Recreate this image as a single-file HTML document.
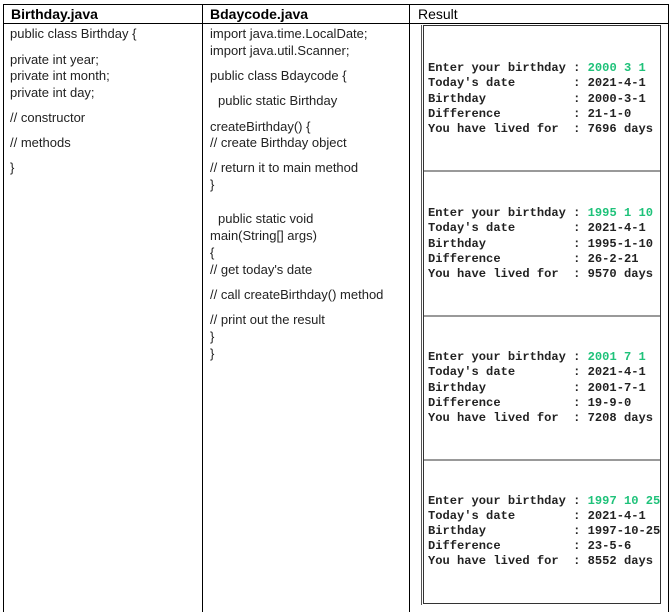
<!DOCTYPE html>
<html><head><style>
body{margin:0;width:672px;height:612px;background:#fff;position:relative;overflow:hidden;font-family:"Liberation Sans",Arial,sans-serif;}
.a{position:absolute;white-space:pre;line-height:1}
.s{font-size:13px;color:#222}
.h{font-size:14px;font-weight:bold;color:#000}
.l{position:absolute;background:#000}
.m{position:absolute;white-space:pre;font-family:"Liberation Mono","DejaVu Sans Mono",monospace;font-weight:bold;font-size:12.1px;color:#222;line-height:1}
.g{color:#1fc27a}
</style></head><body>
<div class="l" style="left:3px;top:4px;width:666px;height:1px"></div>
<div class="l" style="left:3px;top:23px;width:666px;height:1px"></div>
<div class="l" style="left:3px;top:4px;width:1px;height:608px"></div>
<div class="l" style="left:202px;top:4px;width:1px;height:608px"></div>
<div class="l" style="left:409px;top:4px;width:1px;height:608px"></div>
<div class="l" style="left:668px;top:4px;width:1px;height:608px"></div>
<div class="a h" style="left:11px;top:7px">Birthday.java</div>
<div class="a h" style="left:210px;top:7px">Bdaycode.java</div>
<div class="a" style="left:418px;top:7px;font-size:14px">Result</div>

<div class="a s" style="left:10px;top:27px">public class Birthday {</div>
<div class="a s" style="left:10px;top:53px">private int year;</div>
<div class="a s" style="left:10px;top:69px">private int month;</div>
<div class="a s" style="left:10px;top:86px">private int day;</div>
<div class="a s" style="left:10px;top:111px">// constructor</div>
<div class="a s" style="left:10px;top:136px">// methods</div>
<div class="a s" style="left:10px;top:161px">}</div>

<div class="a s" style="left:210px;top:27px">import java.time.LocalDate;</div>
<div class="a s" style="left:210px;top:44px">import java.util.Scanner;</div>
<div class="a s" style="left:210px;top:69px">public class Bdaycode {</div>
<div class="a s" style="left:218px;top:94px">public static Birthday</div>
<div class="a s" style="left:210px;top:120px">createBirthday() {</div>
<div class="a s" style="left:210px;top:136px">// create Birthday object</div>
<div class="a s" style="left:210px;top:161px">// return it to main method</div>
<div class="a s" style="left:210px;top:178px">}</div>
<div class="a s" style="left:218px;top:212px">public static void</div>
<div class="a s" style="left:210px;top:229px">main(String[] args)</div>
<div class="a s" style="left:210px;top:246px">{</div>
<div class="a s" style="left:210px;top:263px">// get today's date</div>
<div class="a s" style="left:210px;top:288px">// call createBirthday() method</div>
<div class="a s" style="left:210px;top:313px">// print out the result</div>
<div class="a s" style="left:210px;top:330px">}</div>
<div class="a s" style="left:210px;top:347px">}</div>

<div class="l" style="left:421px;top:25px;width:1px;height:580px;background:#555"></div>
<div style="position:absolute;left:423px;top:25px;width:236px;height:577px;border:1px solid #333"></div>
<div class="l" style="left:424px;top:170px;width:236px;height:2px;background:#999"></div>
<div class="l" style="left:424px;top:315px;width:236px;height:2px;background:#999"></div>
<div class="l" style="left:424px;top:459px;width:236px;height:2px;background:#999"></div>

<div class="m" style="left:428px;top:61px;line-height:15.3px">Enter your birthday : <span class="g">2000 3 1</span>
Today's date        : 2021-4-1
Birthday            : 2000-3-1
Difference          : 21-1-0
You have lived for  : 7696 days</div>
<div class="m" style="left:428px;top:206px;line-height:15.3px">Enter your birthday : <span class="g">1995 1 10</span>
Today's date        : 2021-4-1
Birthday            : 1995-1-10
Difference          : 26-2-21
You have lived for  : 9570 days</div>
<div class="m" style="left:428px;top:350px;line-height:15.3px">Enter your birthday : <span class="g">2001 7 1</span>
Today's date        : 2021-4-1
Birthday            : 2001-7-1
Difference          : 19-9-0
You have lived for  : 7208 days</div>
<div class="m" style="left:428px;top:494px;line-height:15.1px">Enter your birthday : <span class="g">1997 10 25</span>
Today's date        : 2021-4-1
Birthday            : 1997-10-25
Difference          : 23-5-6
You have lived for  : 8552 days</div>
</body></html>
